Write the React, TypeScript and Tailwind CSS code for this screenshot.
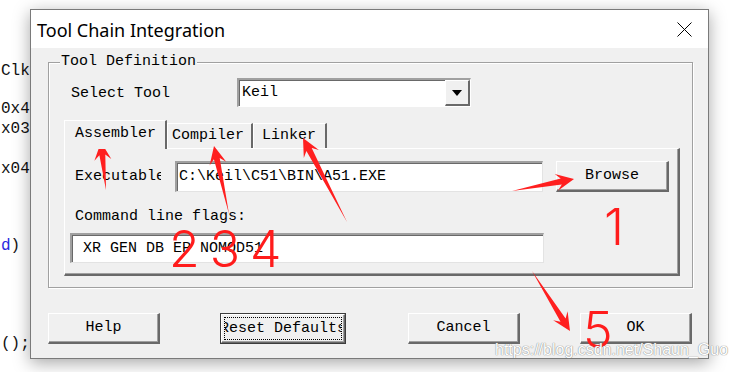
import React from "react";

const mono = "font-['Liberation_Mono',monospace] text-[15px] leading-[20px] text-black";

function arrowPts(x1: number, y1: number, x2: number, y2: number, hl = 18, hw = 17, sw = 6) {
  const dx = x2 - x1, dy = y2 - y1;
  const L = Math.hypot(dx, dy);
  const ux = dx / L, uy = dy / L;
  const nx = -uy, ny = ux;
  const jx = x2 - ux * hl * 0.72, jy = y2 - uy * hl * 0.72;
  const bx = x2 - ux * hl, by = y2 - uy * hl;
  const p = [
    [x1, y1],
    [jx + (nx * sw) / 2, jy + (ny * sw) / 2],
    [bx + (nx * hw) / 2, by + (ny * hw) / 2],
    [x2, y2],
    [bx - (nx * hw) / 2, by - (ny * hw) / 2],
    [jx - (nx * sw) / 2, jy - (ny * sw) / 2],
  ];
  return p.map((q) => q.map((v) => v.toFixed(1)).join(",")).join(" ");
}

const arrows: [number, number, number, number][] = [
  [106, 190, 101, 142],
  [229, 214, 214, 146],
  [347, 222, 303, 138],
  [512, 191, 574, 179],
  [532, 271, 570, 331],
];

function Btn({ label, w, focused }: { label: string; w: string; focused?: boolean }) {
  if (focused) {
    return (
      <div className={`${w} h-[31px] border border-[#3c3c3c] bg-[#f0f0f0] flex`}>
        <div className="flex-1 min-w-0 flex border-t border-l border-t-white border-l-white border-r border-b border-r-[#696969] border-b-[#696969] shadow-[inset_-1px_-1px_0_#a0a0a0] p-[2px]">
          <div className="flex-1 min-w-0 border border-dotted border-black flex items-center justify-center overflow-hidden">
            <span className={`${mono} shrink-0 whitespace-nowrap`}>{label}</span>
          </div>
        </div>
      </div>
    );
  }
  return (
    <div
      className={`${w} ${mono} h-[31px] flex items-center justify-center bg-[#f0f0f0] border-t border-l border-t-white border-l-white border-r-2 border-b-2 border-r-[#696969] border-b-[#696969] shadow-[inset_-1px_-1px_0_#a0a0a0]`}
    >
      {label}
    </div>
  );
}

function Sunken({ w, h, text, pl }: { w: string; h: string; text: string; pl: string }) {
  return (
    <div
      className={`${w} ${h} bg-white border-t-2 border-l-2 border-t-[#a0a0a0] border-l-[#a0a0a0] border-r border-b border-r-[#e3e3e3] border-b-[#e3e3e3] shadow-[inset_1px_1px_0_#696969] flex items-center ${pl} ${mono} whitespace-nowrap overflow-hidden`}
    >
      {text}
    </div>
  );
}

export default function App() {
  return (
    <div className="relative w-[735px] h-[372px] bg-white overflow-hidden">
      {/* background editor text */}
      <div className="flex flex-col pt-[61px] pl-[1px] font-['Liberation_Mono',monospace] text-[16px] leading-[20px] text-[#111]">
        <div>Clk</div>
        <div className="mt-[18px]">0x40</div>
        <div>x03</div>
        <div className="mt-[20px]">x04</div>
        <div className="mt-[57px]">
          <span className="text-[#2a2ae0]">d</span>)
        </div>
        <div className="mt-[78px]">();</div>
      </div>

      {/* dialog window */}
      <div className="absolute left-[30px] top-[9px] w-[679px] h-[350px] border border-[#7a7a7a] bg-[#f0f0f0] shadow-[0_4px_16px_rgba(0,0,0,0.35)] flex flex-col">
        <div className="h-[38px] bg-white flex items-center justify-between pl-[6px] pr-[16px]">
          <span className="font-['Noto_Sans',sans-serif] text-[18px] text-black leading-none pt-[1px]">
            Tool Chain Integration
          </span>
          <svg width="15" height="15" viewBox="0 0 15 15" className="mt-[1px]">
            <path d="M0.5 0.5 L14.5 14.5 M14.5 0.5 L0.5 14.5" stroke="#000" strokeWidth="1" />
          </svg>
        </div>

        <div className="flex-1 flex flex-col">
          {/* group box */}
          <div className="relative mt-[14px] ml-[17px] w-[645px] h-[226px] border border-[#a0a0a0] shadow-[inset_1px_1px_0_#fff,1px_1px_0_#fff] flex flex-col">
            <div className={`absolute left-[11px] top-[-11px] px-[1px] bg-[#f0f0f0] ${mono}`}>Tool Definition</div>

            <div className="mt-[15px] flex items-center pl-[22px]">
              <div className={`${mono} w-[166px] pt-[2px]`}>Select Tool</div>
              <div className="w-[234px] h-[29px] bg-white border-t-2 border-l-2 border-t-[#a0a0a0] border-l-[#a0a0a0] border-r border-b border-r-white border-b-white shadow-[inset_1px_1px_0_#696969] flex items-stretch">
                <div className={`flex-1 flex items-center pl-[3px] ${mono}`}>Keil</div>
                <div className="w-[25px] bg-[#f0f0f0] border-t border-l border-t-white border-l-white border-r-2 border-b-2 border-r-[#696969] border-b-[#696969] flex items-center justify-center">
                  <svg width="10" height="6" viewBox="0 0 10 6">
                    <path d="M0 0 H10 L5 6 Z" fill="#000" />
                  </svg>
                </div>
              </div>
            </div>

            {/* tabs */}
            <div className="mt-[13px] ml-[15px] flex items-end h-[28px]">
              <div className={`relative z-10 w-[103px] h-[29px] -mb-[1px] bg-[#f0f0f0] border-t border-l border-t-white border-l-white border-r-2 border-r-[#696969] pl-[10px] pt-[3px] ${mono}`}>
                Assembler
              </div>
              <div className={`w-[86px] h-[25px] border-t border-l border-t-white border-l-white border-r-2 border-r-[#696969] pl-[4px] pt-[2px] ${mono}`}>
                Compiler
              </div>
              <div className={`w-[74px] h-[25px] border-t border-l border-t-white border-l-white border-r-2 border-r-[#696969] pl-[8px] pt-[2px] ${mono}`}>
                Linker
              </div>
            </div>

            <div className="ml-[15px] w-[616px] h-[128px] border-t border-l border-t-white border-l-white border-r-2 border-b-2 border-r-[#696969] border-b-[#696969] shadow-[inset_-1px_-1px_0_#a0a0a0] flex flex-col">
              <div className="mt-[12px] flex items-center">
                <div className={`${mono} ml-[10px] w-[86px] overflow-hidden whitespace-nowrap`}>Executable</div>
                <div className="ml-[14px]">
                  <Sunken w="w-[368px]" h="h-[31px]" text="C:\Keil\C51\BIN\A51.EXE" pl="pl-[2px]" />
                </div>
                <div className="ml-[13px]">
                  <Btn label="Browse" w="w-[113px]" />
                </div>
              </div>
              <div className={`${mono} mt-[15px] ml-[10px]`}>Command line flags:</div>
              <div className="mt-[6px] ml-[5px]">
                <Sunken w="w-[474px]" h="h-[30px]" text="XR GEN DB EP NOMOD51" pl="pl-[11px]" />
              </div>
            </div>
          </div>

          {/* buttons */}
          <div className="mt-[25px] ml-[17px] flex">
            <Btn label="Help" w="w-[112px]" />
            <div className="ml-[60px]">
              <Btn label="Reset Defaults" w="w-[126px]" focused />
            </div>
            <div className="ml-[62px]">
              <Btn label="Cancel" w="w-[112px]" />
            </div>
            <div className="ml-[60px]">
              <Btn label="OK" w="w-[112px]" />
            </div>
          </div>
        </div>
      </div>

      {/* annotations */}
      <svg className="absolute inset-0 pointer-events-none" width="735" height="372" viewBox="0 0 735 372">
        {arrows.map((a, i) => (
          <polygon key={i} points={arrowPts(a[0], a[1], a[2], a[3])} fill="#ff1f1f" />
        ))}
      </svg>
      <div className="absolute left-[604px] top-[201px] font-['Inter',sans-serif] font-light text-[51px] leading-none text-[#ff1c1c]">1</div>
      <div className="absolute left-[169px] top-[224px] font-['Inter',sans-serif] font-light text-[50px] leading-none text-[#ff1c1c] tracking-[10px]">
        234
      </div>
      <div className="absolute left-[583px] top-[305px] font-['Inter',sans-serif] font-light text-[50px] leading-none text-[#ff1c1c]">5</div>
      <div className="absolute left-[495px] top-[342px] font-['Liberation_Sans',sans-serif] text-[16px] leading-none text-white [text-shadow:0_0_1px_#8a8a8a,0_0_1px_#8a8a8a]">
        https://blog.csdn.net/Shaun_Guo
      </div>
    </div>
  );
}
